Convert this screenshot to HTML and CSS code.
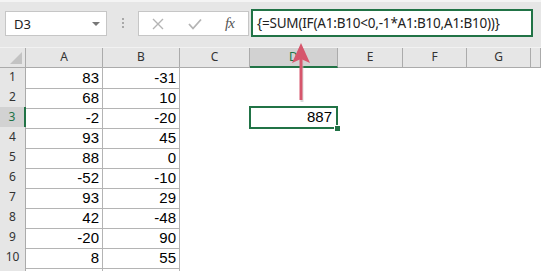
FILE: index.html
```html
<!DOCTYPE html>
<html lang="en">
<head>
    <meta charset="UTF-8">
    <title>Sheet</title>
    <link rel="stylesheet" href="styles.css">
</head>
<body>
    <div class="toolbar">
        <div class="name-box">
            <span>D3</span>
            <span class="caret"></span>
        </div>
        <div class="grip">
            <i></i><i></i><i></i>
        </div>
        <div class="fx-box">
            <svg width="14" height="14" viewBox="0 0 14 14"><path d="M2 2 L12 12 M12 2 L2 12" stroke="#b4b4b4" stroke-width="1.4" fill="none"/></svg>
            <svg width="16" height="14" viewBox="0 0 16 14"><path d="M2 7 L6 11.5 L14 2.5" stroke="#b4b4b4" stroke-width="1.8" fill="none"/></svg>
            <span class="fx">fx</span>
        </div>
        <div class="formula">{=SUM(IF(A1:B10&lt;0,-1*A1:B10,A1:B10))}</div>
    </div>

    <div class="sheet">
        <div class="row head">
            <div class="corner"><span class="tri"></span></div>
            <div class="col">A</div>
            <div class="col">B</div>
            <div class="col">C</div>
            <div class="col sel">D</div>
            <div class="col">E</div>
            <div class="col">F</div>
            <div class="col">G</div>
            <div class="col"></div>
        </div>
        <div id="rows"></div>
    </div>

    <!-- flecha ke formula bar -->
    <svg class="pointer" width="30" height="66" viewBox="0 0 30 66">
        <path d="M16 20 L16 62" stroke="#c7c7c7" stroke-width="3" opacity="0.6"/>
        <path d="M15 19 L15 60" stroke="#d6566c" stroke-width="3"/>
        <path d="M15 3 L24 23 L15 19 L6 23 Z" fill="#d6566c"/>
    </svg>

    <script>
        const data = [[83, -31], [68, 10], [-2, -20], [93, 45], [88, 0],
                      [-52, -10], [93, 29], [42, -48], [-20, 90], [8, 55], ['', '']];
        const rows = document.getElementById('rows');

        data.forEach((pair, i) => {
            const row = document.createElement('div');
            row.className = 'row';
            let html = '<div class="rh' + (i === 2 ? ' sel' : '') + '">' + (i < 10 ? i + 1 : '') + '</div>';
            html += '<div class="cell">' + pair[0] + '</div>';
            html += '<div class="cell">' + pair[1] + '</div>';
            html += '<div class="blank"></div>';
            html += i === 2 ? '<div class="blank active">887</div>' : '<div class="blank"></div>';
            html += '<div class="blank"></div><div class="blank"></div><div class="blank"></div><div class="blank"></div>';
            row.innerHTML = html;
            rows.appendChild(row);
        });
    </script>
</body>
</html>
```
FILE: styles.css
```css
body {
    margin: 0;
    width: 541px;
    height: 271px;
    overflow: hidden;
    position: relative;
    background: #fff;
    font-family: 'Liberation Sans', Arial, sans-serif;
}

.toolbar {
    height: 47px;
    box-sizing: border-box;
    background: #e6e6e6;
    border-top: 2px solid #f4f4f4;
    display: flex;
    align-items: flex-start;
    padding: 7px 0 0 5px;
}

.name-box {
    width: 102px;
    height: 25px;
    margin-top: 2px;
    box-sizing: border-box;
    background: #fff;
    border: 1px solid #c6c6c6;
    display: flex;
    align-items: center;
    justify-content: space-between;
    padding: 0 6px 0 8px;
    font-family: 'Noto Sans', sans-serif;
    font-size: 13px;
    color: #222;
}

.caret {
    width: 0;
    height: 0;
    border-left: 4px solid transparent;
    border-right: 4px solid transparent;
    border-top: 4px solid #777;
}

.grip {
    width: 31px;
    display: flex;
    flex-direction: column;
    align-items: center;
    gap: 2px;
    padding-top: 9px;
}

.grip i {
    width: 2px;
    height: 2px;
    background: #a8a8a8;
}

.fx-box {
    width: 111px;
    height: 25px;
    margin-top: 2px;
    box-sizing: border-box;
    background: #fff;
    border: 1px solid #c6c6c6;
    display: flex;
    align-items: center;
    gap: 22px;
    padding-left: 12px;
}

.fx {
    font-family: 'Liberation Serif', serif;
    font-style: italic;
    font-size: 15px;
    color: #555;
    letter-spacing: -1px;
}

.formula {
    width: 282px;
    height: 28px;
    margin-left: 2px;
    box-sizing: border-box;
    background: #fff;
    border: 2px solid #217346;
    display: flex;
    align-items: center;
    padding-left: 4px;
    font-family: 'Noto Sans', sans-serif;
    font-size: 13.5px;
    color: #222;
    white-space: nowrap;
    letter-spacing: -0.2px;
}

.row {
    display: grid;
    grid-template-columns: 26px 77px 77px 70px 88px 65px 64px 64px 10px;
    height: 20px;
}

.head {
    background: #e6e6e6;
    border-top: 1px solid #f2f2f2;
    height: 19px;
}

.head .col {
    border-right: 1px solid #ababab;
    border-bottom: 1px solid #ababab;
    font-family: 'Noto Sans', sans-serif;
    font-size: 12px;
    color: #333;
    text-align: center;
    line-height: 18px;
}

.head .col.sel {
    background: #d2d2d2;
    border-bottom: 2px solid #217346;
    color: #217346;
}

.corner {
    border-right: 1px solid #ababab;
    border-bottom: 1px solid #ababab;
    position: relative;
}

.tri {
    position: absolute;
    right: 3px;
    bottom: 3px;
    width: 0;
    height: 0;
    border-left: 12px solid transparent;
    border-bottom: 12px solid #c3c3c3;
}

.rh {
    background: #e6e6e6;
    border-right: 1px solid #ababab;
    border-bottom: 1px solid #d4d4d4;
    font-family: 'Noto Sans', sans-serif;
    font-size: 12px;
    color: #333;
    line-height: 20px;
    text-align: center;
}

.rh.sel {
    background: #d2d2d2;
    border-right: 2px solid #217346;
    color: #217346;
}

.cell {
    border-right: 1px solid #b4b4b4;
    border-bottom: 1px solid #b4b4b4;
    text-align: right;
    padding-right: 3px;
    font-size: 15px;
    line-height: 21px;
    color: #000;
}

.blank {
    font-size: 15px;
    line-height: 18px;
}

.active {
    position: relative;
    margin: -1px 0 0 -1px;
    border: 2px solid #217346;
    text-align: right;
    padding-right: 4px;
}

.active::after {
    content: "";
    position: absolute;
    right: -4px;
    bottom: -4px;
    width: 5px;
    height: 5px;
    background: #217346;
    border-left: 1px solid #fff;
    border-top: 1px solid #fff;
}

.pointer {
    position: absolute;
    left: 286px;
    top: 40px;
}
```
